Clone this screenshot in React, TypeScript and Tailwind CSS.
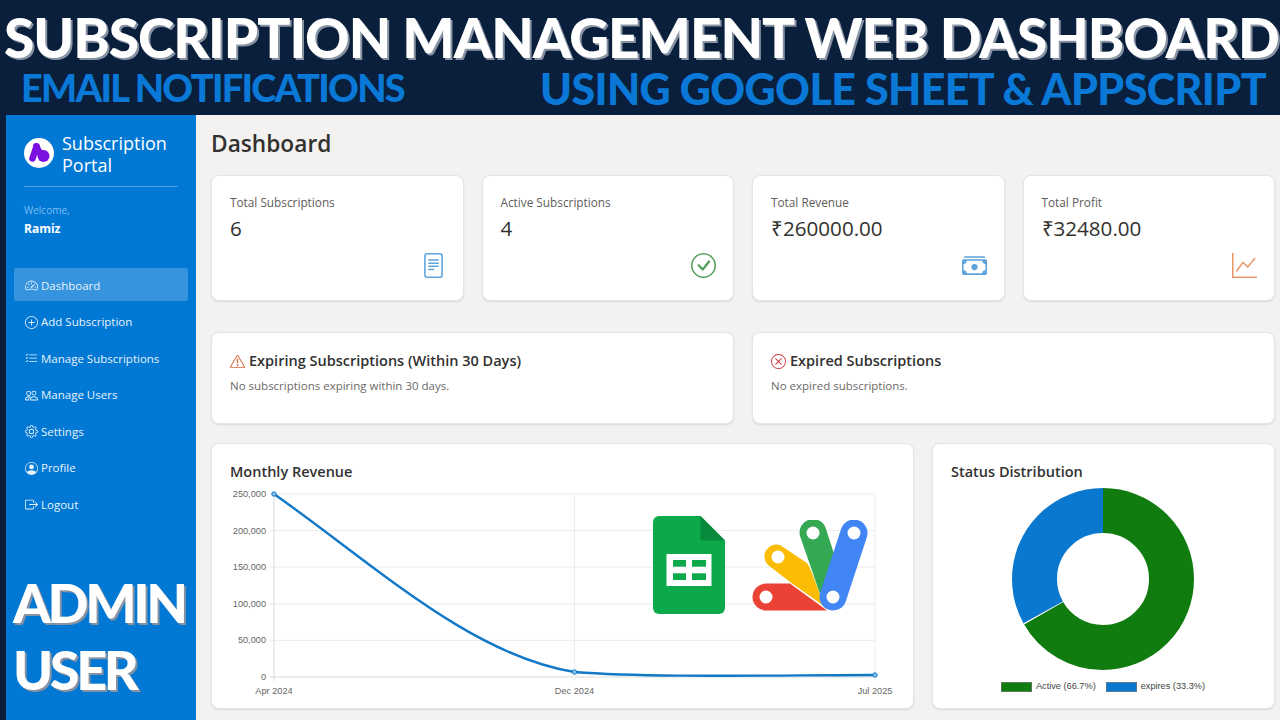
import { BsSpeedometer2, BsPlusCircle, BsListCheck, BsPeople, BsGear, BsPersonCircle, BsBoxArrowRight, BsFileText, BsCheckCircle, BsCashStack, BsGraphUp, BsExclamationTriangle, BsXCircle } from "react-icons/bs";

const nav = [
  { label: "Dashboard", Icon: BsSpeedometer2, active: true },
  { label: "Add Subscription", Icon: BsPlusCircle },
  { label: "Manage Subscriptions", Icon: BsListCheck },
  { label: "Manage Users", Icon: BsPeople },
  { label: "Settings", Icon: BsGear },
  { label: "Profile", Icon: BsPersonCircle },
  { label: "Logout", Icon: BsBoxArrowRight },
];

const stats = [
  { label: "Total Subscriptions", value: "6", Icon: BsFileText, color: "text-[#5ea3dc]" },
  { label: "Active Subscriptions", value: "4", Icon: BsCheckCircle, color: "text-[#55a05c]" },
  { label: "Total Revenue", value: "₹260000.00", Icon: BsCashStack, color: "text-[#5ea3dc]" },
  { label: "Total Profit", value: "₹32480.00", Icon: BsGraphUp, color: "text-[#e89a68]" },
];

const yTicks = [
  { y: 494, t: "250,000" },
  { y: 530.6, t: "200,000" },
  { y: 567.2, t: "150,000" },
  { y: 603.8, t: "100,000" },
  { y: 640.4, t: "50,000" },
  { y: 677, t: "0" },
];

function RevenueChart() {
  return (
    <svg viewBox="212 444 701 264" className="absolute inset-0 w-full h-full" style={{ fontFamily: '"Liberation Sans", Arial, sans-serif' }}>
      {yTicks.map((t) => (
        <g key={t.t}>
          <line x1="270" x2="875" y1={t.y} y2={t.y} stroke={t.t === "0" ? "#d9d9d9" : "#ececec"} strokeWidth="1" />
          <text x="266" y={t.y + 3} textAnchor="end" fontSize="9.2" fill="#666">{t.t}</text>
        </g>
      ))}
      <line x1="274" x2="274" y1="494" y2="681" stroke="#d9d9d9" />
      <line x1="574.5" x2="574.5" y1="494" y2="681" stroke="#ececec" />
      <line x1="875" x2="875" y1="494" y2="681" stroke="#ececec" />
      <text x="274" y="694" textAnchor="middle" fontSize="9.2" fill="#666">Apr 2024</text>
      <text x="574.5" y="694" textAnchor="middle" fontSize="9.2" fill="#666">Dec 2024</text>
      <text x="875" y="694" textAnchor="middle" fontSize="9.2" fill="#666">Jul 2025</text>
      <path d="M274 494 C 375 565, 470 655, 574.5 672 C 650 678, 780 675, 875 675" fill="none" stroke="#1278c8" strokeWidth="2.4" />
      {[[274, 494], [574.5, 672], [875, 675]].map(([x, y]) => (
        <circle key={x} cx={x} cy={y} r="2.2" fill="#8fc3ea" stroke="#1278c8" strokeWidth="1" />
      ))}
    </svg>
  );
}

function SheetsLogo() {
  return (
    <svg viewBox="0 0 72 98" className="absolute left-[441px] top-[72px] w-[72px] h-[98px]">
      <path d="M6 0 H47.5 L72 24.5 V92 a6 6 0 0 1 -6 6 H6 a6 6 0 0 1 -6 -6 V6 a6 6 0 0 1 6 -6z" fill="#0ca94a" />
      <path d="M47.5 0 L72 24.5 H47.5z" fill="#078a3a" />
      <rect x="13.5" y="38" width="45" height="32" fill="#fff" />
      <rect x="20" y="44" width="13" height="6.7" fill="#0ca94a" />
      <rect x="39" y="44" width="14" height="6.7" fill="#0ca94a" />
      <rect x="20" y="57.3" width="13" height="6.7" fill="#0ca94a" />
      <rect x="39" y="57.3" width="14" height="6.7" fill="#0ca94a" />
    </svg>
  );
}

function AppsScriptLogo() {
  return (
    <svg viewBox="0 0 116 92" className="absolute left-[540px] top-[76px] w-[116px] h-[92px]">
      <path d="M14 63.5 H38 L75 90.5 H14 a13.5 13.5 0 0 1 0 -27z" fill="#ea4335" />
      <path d="M28 25 L55 43 C 60 50 66 70 72 86 L38 62 L16 45 A 12 12 0 0 1 28 25z" fill="#fbbc04" />
      <path d="M48 16 A 13.3 13.3 0 0 1 74 9 L84 40 L72 86 Q 60 50 48 16z" fill="#34a853" />
      <path d="M102 13 L81 77" fill="none" stroke="#4285f4" strokeWidth="27" strokeLinecap="round" />
      <circle cx="14" cy="77" r="6.5" fill="#fff" />
      <circle cx="26" cy="37" r="6.5" fill="#fff" />
      <circle cx="61" cy="13" r="6.5" fill="#fff" />
      <circle cx="102" cy="13" r="6.5" fill="#fff" />
      <circle cx="81" cy="77" r="6.5" fill="#fff" />
    </svg>
  );
}

function Donut() {
  const r = 68.5;
  const c = 2 * Math.PI * r;
  return (
    <svg viewBox="0 0 182 182" className="w-[182px] h-[182px]">
      <g transform="rotate(-90 91 91)">
        <circle cx="91" cy="91" r={r} fill="none" stroke="#107c10" strokeWidth="45" strokeDasharray={`${c * 0.6667} ${c}`} />
        <circle cx="91" cy="91" r={r} fill="none" stroke="#0b78d0" strokeWidth="45" strokeDasharray={`${c * 0.3333} ${c}`} strokeDashoffset={-c * 0.6667} />
        <circle cx="91" cy="91" r={r} fill="none" stroke="#fff" strokeWidth="45" strokeDasharray={`1 ${c * 0.3333 - 1} 1 ${c}`} strokeDashoffset={-c * 0.6667 + 0.5} />
      </g>
    </svg>
  );
}

const card = "bg-white rounded-[8px] border border-[#e6e5e4] shadow-[0_1px_2px_rgba(0,0,0,0.1)]";

export default function App() {
  return (
    <div className="w-[1280px] h-[720px] overflow-hidden flex flex-col bg-[#0a1f3c] font-['Open_Sans',sans-serif]">
      <header className="h-[115px] shrink-0 flex flex-col font-['Lato',sans-serif] font-black">
        <div className="h-[64px] pt-[10px] pl-[4px] text-white text-[55px] leading-[54px] whitespace-nowrap tracking-[-1px] [text-shadow:2px_2px_0_#8792a2]">
          SUBSCRIPTION MANAGEMENT WEB DASHBOARD
        </div>
        <div className="flex justify-between items-start pl-[21px] pr-[14px] text-[#0a78d6] whitespace-nowrap">
          <span className="text-[38px] leading-[46px] tracking-[-1.7px]">EMAIL NOTIFICATIONS</span>
          <span className="text-[43px] leading-[50px] tracking-[-0.6px]">USING GOGOLE SHEET &amp; APPSCRIPT</span>
        </div>
      </header>

      <div className="flex-1 min-h-0 flex">
        <div className="w-[6px] shrink-0" />
        <aside className="w-[190px] shrink-0 bg-[#0078d4] flex flex-col pt-[18px] text-white">
          <div className="mx-[18px] h-[54px] border-b border-[#4fa3e8] flex items-start gap-[8px]">
            <div className="w-[30px] h-[30px] mt-[5px] rounded-full bg-white shrink-0">
              <svg viewBox="0 0 30 30" className="w-[30px] h-[30px]">
                <path d="M8.5 20.5 L12.5 8.5" fill="none" stroke="#7a0fe0" strokeWidth="6.5" strokeLinecap="round" />
                <path d="M12.5 8.5 C 13.5 13, 15 15, 19.5 17.5" fill="none" stroke="#7a0fe0" strokeWidth="7" strokeLinecap="round" />
                <circle cx="19.5" cy="18" r="6" fill="#7a0fe0" />
              </svg>
            </div>
            <div className="text-[18px] leading-[21.5px] font-normal">Subscription<br />Portal</div>
          </div>
          <div className="mx-[18px] mt-[16px] text-[10px] leading-[14px] text-[#7cbdf3]">Welcome,</div>
          <div className="mx-[18px] mt-[4px] text-[12px] leading-[16px] font-bold">Ramiz</div>
          <nav className="mt-[31px] mx-[8px] flex flex-col gap-[3.5px]">
            {nav.map(({ label, Icon, active }) => (
              <div key={label} className={`h-[33px] px-[11px] pt-[2px] flex items-center gap-[3px] rounded-[2px] text-[11.5px] text-[#e6f2fb] ${active ? "bg-[#3693de]" : ""}`}>
                <Icon className="w-[13px] h-[13px] shrink-0" />
                <span>{label}</span>
              </div>
            ))}
          </nav>
          <div className="mt-[49px] ml-[7px] font-['Lato',sans-serif] font-black text-white text-[54px] leading-[67px] tracking-[-3.4px] [text-shadow:2px_2px_0_#8792a2]">
            <div>ADMIN</div>
            <div>USER</div>
          </div>
        </aside>

        <main className="flex-1 min-w-0 bg-[#f3f2f1] pl-[15px] pr-[5px] pt-[13px] flex flex-col text-[#323130]">
          <h1 className="text-[22.7px] leading-[32px] font-[550] h-[47px]">Dashboard</h1>
          <section className="grid grid-cols-4 gap-[18px] h-[126px]">
            {stats.map(({ label, value, Icon, color }) => (
              <div key={label} className={`relative ${card} pl-[18px] pt-[17px]`}>
                <div className="text-[11.8px] leading-[18px] text-[#5e5c5a]">{label}</div>
                <div className="mt-[2px] text-[20.6px] leading-[30px] font-medium">{value}</div>
                <div className={`absolute right-[17px] bottom-[22px] ${color}`}>
                  <Icon className="w-[25px] h-[25px]" />
                </div>
              </div>
            ))}
          </section>
          <section className="grid grid-cols-2 gap-[18px] h-[92px] mt-[31px]">
            <div className={`${card} pl-[18px] pt-[17px]`}>
              <div className="flex items-center gap-[4px] text-[14.5px] leading-[22px] font-[550]">
                <BsExclamationTriangle className="w-[15px] h-[15px] text-[#d8663a]" />
                <span>Expiring Subscriptions (Within 30 Days)</span>
              </div>
              <p className="mt-[5px] text-[11.5px] leading-[18px] text-[#6b6967]">No subscriptions expiring within 30 days.</p>
            </div>
            <div className={`${card} pl-[18px] pt-[17px]`}>
              <div className="flex items-center gap-[4px] text-[14.5px] leading-[22px] font-[550]">
                <BsXCircle className="w-[15px] h-[15px] text-[#c8383f]" />
                <span>Expired Subscriptions</span>
              </div>
              <p className="mt-[5px] text-[11.5px] leading-[18px] text-[#6b6967]">No expired subscriptions.</p>
            </div>
          </section>
          <section className="flex gap-[18px] h-[266px] mt-[19px]">
            <div className={`relative w-[703px] shrink-0 ${card}`}>
              <RevenueChart />
              <div className="relative pl-[18px] pt-[17px] text-[14.5px] leading-[22px] font-[550]">Monthly Revenue</div>
              <SheetsLogo />
              <AppsScriptLogo />
            </div>
            <div className={`flex-1 min-w-0 ${card} flex flex-col`}>
              <div className="pl-[18px] pt-[17px] text-[14.5px] leading-[22px] font-[550] h-[44px]">Status Distribution</div>
              <div className="flex justify-center pr-[2px]">
                <Donut />
              </div>
              <div className="flex justify-center items-center gap-[10px] mt-[10px] pr-[1px] font-['Liberation_Sans',sans-serif] text-[9.2px] text-[#444]">
                <span className="flex items-center gap-[4px]"><span className="w-[31px] h-[10px] bg-[#107c10] border border-[#5a7a5a]" />Active (66.7%)</span>
                <span className="flex items-center gap-[4px]"><span className="w-[31px] h-[10px] bg-[#0b78d0] border border-[#5a7a9a]" />expires (33.3%)</span>
              </div>
            </div>
          </section>
        </main>
      </div>
    </div>
  );
}
